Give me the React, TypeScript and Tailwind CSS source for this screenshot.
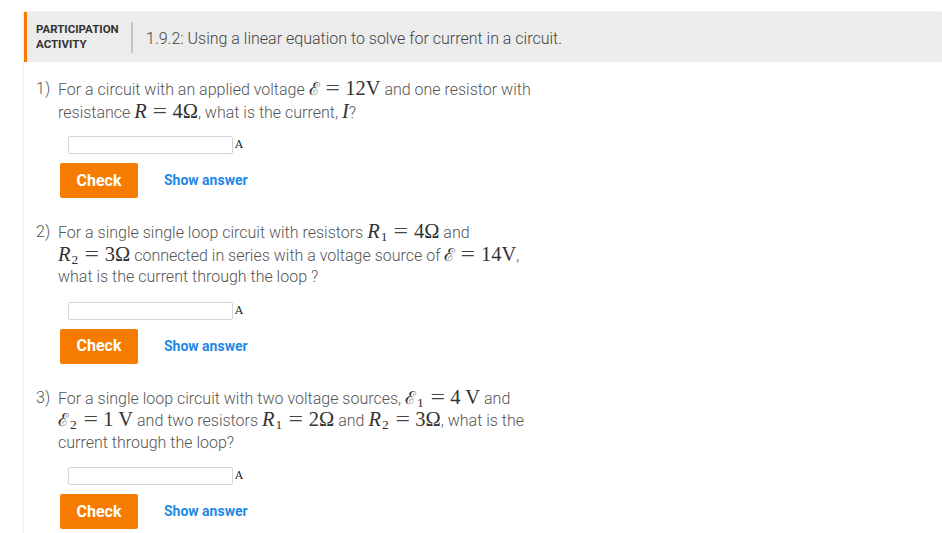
import React from "react";

const sans = { fontFamily: "Roboto, 'Noto Sans', sans-serif" };
const serif = { fontFamily: "'Liberation Serif', 'DejaVu Serif', serif" };

function Sub({ s }: { s: string }) {
  return <span className="not-italic text-[13.5px] relative top-[3px] ml-[1px] mr-[1px] leading-none" style={serif}>{s}</span>;
}

function V({ children, sub }: { children: React.ReactNode; sub?: string }) {
  return (
    <span className="italic" style={serif}>
      {children}
      {sub && <Sub s={sub} />}
    </span>
  );
}

function M({ children }: { children: React.ReactNode }) {
  return (
    <span className="text-[20.5px] leading-none text-[#333]" style={serif}>
      {children}
    </span>
  );
}

function Eq() {
  return <span className="mx-[7px] text-[#444] inline-block scale-x-125">=</span>;
}

function Script({ sub }: { sub?: string }) {
  return (
    <span className="leading-none">
      <span style={{ fontFamily: "'DejaVu Serif', serif" }} className="text-[18px]">ℰ</span>
      {sub && <Sub s={sub} />}
    </span>
  );
}

function Question({ n, lines }: { n: number; lines: React.ReactNode[] }) {
  return (
    <div className="flex flex-col">
      <div className="flex text-[16px] leading-[22.5px] text-[#555] font-light" style={sans}>
        <div className="w-[22px] shrink-0">{n})</div>
        <div className="flex flex-col">
          {lines.map((l, i) => (
            <div key={i} className="whitespace-nowrap h-[22.5px]">{l}</div>
          ))}
        </div>
      </div>
      <div className="flex items-center mt-[13px] ml-[32px]">
        <div className="w-[165px] h-[18px] border border-[#cfd8dc] rounded-[2px] bg-white" />
        <span className="ml-[2px] text-[11px] text-[#222] mt-[1px]" style={{ fontFamily: "'DejaVu Serif', serif" }}>A</span>
      </div>
      <div className="flex items-center mt-[9px] ml-[24px]">
        <button
          className="w-[78px] h-[35px] bg-[#f57c00] text-white font-bold text-[16px] rounded-[2px]"
          style={sans}
        >
          Check
        </button>
        <span className="ml-[26px] text-[#1e88e5] font-bold text-[14px]" style={sans}>
          Show answer
        </span>
      </div>
    </div>
  );
}

export default function App() {
  return (
    <div className="w-[942px] h-[533px] overflow-hidden bg-white pt-[12px] pl-[24px]">
      <div className="shadow-[0_0_2px_rgba(0,0,0,0.18)] bg-white h-[600px]">
        <div className="h-[50px] bg-[#ececec] border-l-[3px] border-[#f57c00] flex items-center">
          <div className="pl-[9px] w-[104px] text-[11.5px] leading-[15px] font-bold text-[#333]" style={sans}>
            PARTICIPATION
            <br />
            ACTIVITY
          </div>
          <div className="w-[2px] h-[31px] bg-[#c4c4c4]" />
          <div className="ml-[13px] mt-[3px] text-[16px] font-light text-[#444]" style={sans}>
            1.9.2: Using a linear equation to solve for current in a circuit.
          </div>
        </div>
        <div className="pl-[12px] pt-[16px] flex flex-col gap-[23px]">
          <Question
            n={1}
            lines={[
              <>
                For a circuit with an applied voltage <M><Script /><Eq />12V</M> and one resistor with
              </>,
              <>
                resistance <M><V>R</V><Eq />4Ω</M>, what is the current, <M><V>I</V></M>?
              </>,
            ]}
          />
          <Question
            n={2}
            lines={[
              <>
                For a single single loop circuit with resistors <M><V sub="1">R</V><Eq />4Ω</M> and
              </>,
              <>
                <M><V sub="2">R</V><Eq />3Ω</M> connected in series with a voltage source of <M><Script /><Eq />14V</M>,
              </>,
              <>what is the current through the loop ?</>,
            ]}
          />
          <Question
            n={3}
            lines={[
              <>
                For a single loop circuit with two voltage sources, <M><Script sub="1" /><Eq />4 V</M> and
              </>,
              <>
                <M><Script sub="2" /><Eq />1 V</M> and two resistors <M><V sub="1">R</V><Eq />2Ω</M> and <M><V sub="2">R</V><Eq />3Ω</M>, what is the
              </>,
              <>current through the loop?</>,
            ]}
          />
        </div>
      </div>
    </div>
  );
}
